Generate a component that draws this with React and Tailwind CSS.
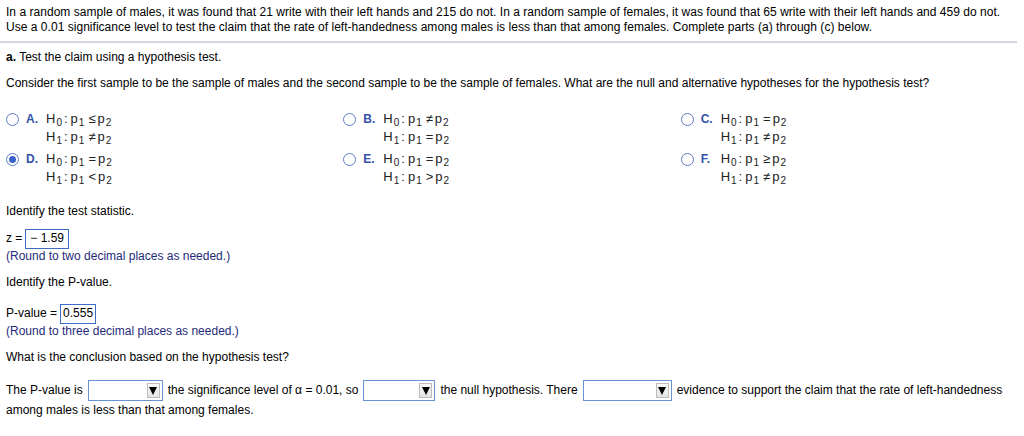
const Radio = ({ checked }) => (
  <span className="inline-flex w-[13px] h-[13px] rounded-full border border-[#5d7cc4] bg-white items-center justify-center shrink-0">
    {checked && <span className="w-[7px] h-[7px] rounded-full bg-[#3a62c9]" />}
  </span>
);

const Sub = ({ children }) => (
  <span className="text-[10px] relative top-[3px] ml-[1px]">{children}</span>
);

const Hyp = ({ n, rel }) => (
  <div className="h-[18px] leading-[18px] whitespace-nowrap text-[13px] text-[#222]">
    H<Sub>{n}</Sub>
    <span className="ml-[2px] mr-[3px]">:</span>p<Sub>1</Sub>
    <span className="ml-[4px] mr-[2px]">{rel}</span>p<Sub>2</Sub>
  </div>
);

const Option = ({ letter, h0, h1, checked }) => (
  <div className="flex">
    <div className="h-[18px] flex items-center">
      <Radio checked={checked} />
    </div>
    <div className="h-[18px] flex items-center ml-[7px] w-[20px] font-bold text-[#3452a8]">{letter}.</div>
    <div>
      <Hyp n="0" rel={h0} />
      <Hyp n="1" rel={h1} />
    </div>
  </div>
);

const Select = ({ w }) => (
  <span className={`inline-flex align-middle h-[21px] -my-[1px] ${w} border border-[#6a93d6] bg-white justify-end p-[2px] mx-[5px]`}>
    <span className="w-[13px] h-full bg-gradient-to-b from-[#fbfbfb] to-[#e4e4e4] border border-[#bdbdbd] flex items-center justify-center">
      <svg width="8" height="9" viewBox="0 0 8 9">
        <path d="M0 1 L8 1 L4 9 Z" fill="#000" />
      </svg>
    </span>
  </span>
);

const App = () => {
  return (
    <div className="w-[1024px] h-[436px] bg-white text-black text-[12px] font-['Liberation_Sans',Arial,sans-serif] overflow-hidden">
      <div className="pl-[6px] pt-[5px] pr-[6px] leading-[15px] tracking-[0.03px]">
        <p>
          In a random sample of males, it was found that 21 write with their left hands and 215 do not. In a random sample of females, it was found that 65 write with their left hands and 459 do not.
          Use a 0.01 significance level to test the claim that the rate of left-handedness among males is less than that among females. Complete parts (a) through (c) below.
        </p>
      </div>
      <div className="w-[1017px] h-[2px] bg-[#d3d7e0] mt-[6px]" />
      <div className="pl-[6px] pr-[6px] leading-[15px]">
        <p className="mt-[7px]">
          <span className="font-bold">a.</span> Test the claim using a hypothesis test.
        </p>
        <p className="mt-[11px]">
          Consider the first sample to be the sample of males and the second sample to be the sample of females. What are the null and alternative hypotheses for the hypothesis test?
        </p>
        <div className="grid grid-cols-3 mt-[19px] gap-y-[4px]">
          <Option letter="A" h0="≤" h1="≠" />
          <Option letter="B" h0="≠" h1="=" />
          <Option letter="C" h0="=" h1="≠" />
          <Option letter="D" h0="=" h1="<" checked />
          <Option letter="E" h0="=" h1=">" />
          <Option letter="F" h0="≥" h1="≠" />
        </div>
        <p className="mt-[18px]">Identify the test statistic.</p>
        <div className="mt-[9px] flex items-center h-[21px]">
          z =
          <span className="ml-[3px] inline-flex items-center h-[20px] px-[4px] border border-[#3d6cc7]">− 1.59</span>
        </div>
        <p className="text-[#1f2b7a]">(Round to two decimal places as needed.)</p>
        <p className="mt-[11px]">Identify the P-value.</p>
        <div className="mt-[13px] flex items-center h-[21px]">
          P-value =
          <span className="ml-[3px] inline-flex items-center h-[20px] px-[2px] border border-[#3d6cc7]">0.555</span>
        </div>
        <p className="text-[#1f2b7a]">(Round to three decimal places as needed.)</p>
        <p className="mt-[11px]">What is the conclusion based on the hypothesis test?</p>
        <div className="mt-[15px] leading-[20px]">
          <div>
            <span>The P-value is</span>
            <Select w="w-[75px]" />
            <span>the significance level of α = 0.01, so</span>
            <Select w="w-[72px]" />
            <span>the null hypothesis. There</span>
            <Select w="w-[89px]" />
            <span>evidence to support the claim that the rate of left-handedness</span>
          </div>
          <div>among males is less than that among females.</div>
        </div>
      </div>
    </div>
  );
};

export default App;
